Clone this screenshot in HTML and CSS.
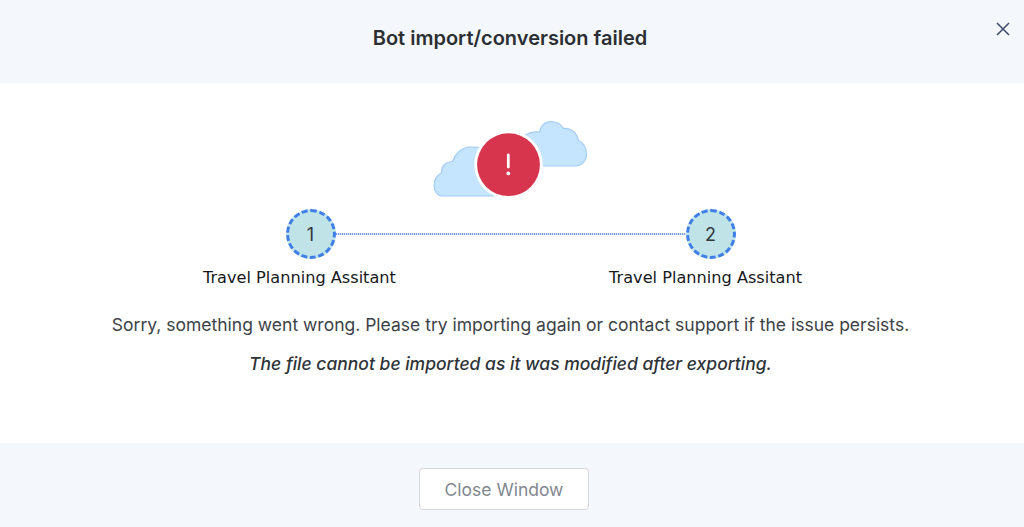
FILE: index.html
```html
<!DOCTYPE html>
<html lang="en">
<head>
<meta charset="utf-8">
<title>Bot import/conversion failed</title>
<link rel="stylesheet" href="styles.css">
</head>
<body>
<div class="modal">
  <header class="head">
    <h1 class="title">Bot import/conversion failed</h1>
    <button class="close" aria-label="Close">
      <svg width="14" height="14" viewBox="0 0 14 14"><path d="M1 1L13 13M13 1L1 13" stroke="#3b4a68" stroke-width="1.5" fill="none"/></svg>
    </button>
  </header>
  <main class="body">
    <svg class="art" width="156" height="78" viewBox="0 0 156 78">
      <path class="cloud" d="M92 46 V16 C96 13 102 11.5 107.5 12 C108.5 6 113 1.5 119 1.5 C124 1.5 129 4 131.5 8.5 C138 7.5 145 12 146.5 20.5 C151 22 154.5 28 154.5 34 C154.5 41 149.5 46 143 46 Z"/>
      <path class="cloud" d="M64 76 H11 C5.5 76 2 71 2 65.5 C2 60 5 55.5 9.5 53 C9 46.5 13 42 20.5 41.5 C23 34 30 27 38 27 C42 27 46 27 50 28 L64 28 Z"/>
      <circle cx="76.5" cy="44.7" r="34.3" fill="#fff"/>
      <circle cx="76.5" cy="44.7" r="31.4" fill="#d7354e"/>
      <path d="M76.3 35V47" stroke="#fff" stroke-width="2.8" stroke-linecap="round"/>
      <circle cx="76.3" cy="53.4" r="1.9" fill="#fff"/>
    </svg>
    <div class="track">
      <span class="node">1</span>
      <span class="line"></span>
      <span class="node">2</span>
    </div>
    <div class="labels">
      <span class="label">Travel Planning Assitant</span>
      <span class="label">Travel Planning Assitant</span>
    </div>
    <p class="msg">Sorry, something went wrong. Please try importing again or contact support if the issue persists.</p>
    <p class="reason">The file cannot be imported as it was modified after exporting.</p>
  </main>
  <footer class="foot">
    <button class="btn">Close Window</button>
  </footer>
</div>
</body>
</html>
```
FILE: styles.css
```css
* { box-sizing: border-box; }
html, body { margin: 0; height: 100%; background: #fff; overflow: hidden; }
body { font-family: Inter, "Liberation Sans", sans-serif; color: #2e3338; }
.modal { width: 1024px; height: 527px; display: flex; flex-direction: column; }
.head { height: 83px; flex: none; background: #f4f7fb; display: flex; align-items: center; justify-content: center; position: relative; padding: 0 4px 8px 0; }
.title { margin: 0; font-size: 20px; line-height: 24px; font-weight: 600; color: #2b2f33; }
.close { position: absolute; top: 22px; right: 14px; width: 14px; height: 14px; padding: 0; border: 0; background: none; display: block; line-height: 0; }
.body { flex: 1; display: flex; flex-direction: column; align-items: center; padding: 37px 3px 0 0; }
.art { display: block; flex: none; margin-left: -2px; }
.cloud { fill: #c5e4fd; stroke: #a3cdf8; stroke-width: 1.2; }
.track { display: flex; align-items: center; width: 450px; margin-top: 11px; }
.node { width: 50px; height: 50px; flex: none; border-radius: 50%; border: 3px dashed #3f7ee8; background: #bfe3e6; display: flex; align-items: center; justify-content: center; font-size: 18px; color: #33383d; }
.line { flex: 1; height: 2px; background: repeating-linear-gradient(90deg, #7fa3e2 0 1px, #d3dff5 1px 2px); }
.labels { display: flex; justify-content: space-between; width: 599px; margin-top: 9px; margin-left: -16px; }
.label { font-family: "DejaVu Sans", sans-serif; font-size: 16.15px; line-height: 20px; color: #17191c; white-space: nowrap; }
.msg { margin: 27px 0 0; font-size: 17.5px; line-height: 20px; color: #3c4248; white-space: nowrap; }
.reason { margin: 19px 0 0; font-size: 17.5px; line-height: 20px; font-style: italic; font-weight: 500; color: #2e3338; white-space: nowrap; }
.foot { height: 84px; flex: none; background: #f4f7fb; display: flex; justify-content: center; padding: 25px 16px 0 0; }
.btn { width: 170px; height: 42px; background: #fff; border: 1px solid #d4d6da; border-radius: 4px; font-family: inherit; font-size: 17.5px; color: #83888f; padding: 0; }
```
